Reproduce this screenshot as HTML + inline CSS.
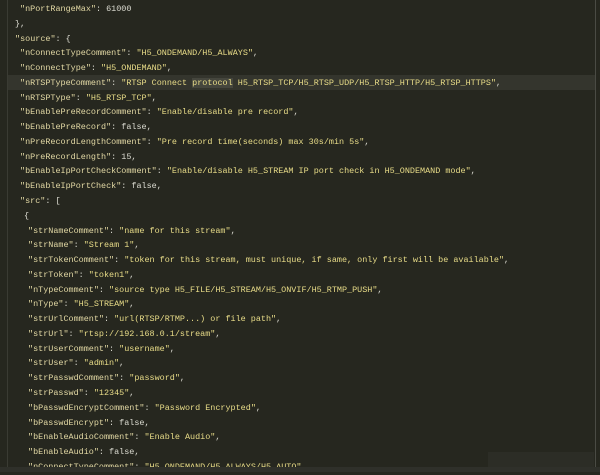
<!DOCTYPE html>
<html><head><style>
html,body{margin:0;padding:0;}
body{width:600px;height:472px;background:#26271f;overflow:hidden;position:relative;font-family:"Liberation Mono",monospace;font-size:8.45px;color:#dcdcd2;}
.g{position:absolute;left:7px;top:0;width:1px;height:468px;background:#3a3b33;}
.sb{position:absolute;left:595px;top:0;width:1px;height:468px;background:#4a4b44;}
.hl{position:absolute;left:8px;top:75px;width:587px;height:15px;background:#34352d;}
.sel{background:#45463d;}
.l{position:absolute;white-space:pre;line-height:14.77px;}
.k{color:#e2d8a4;}.s{color:#e8dc88;}
</style></head><body>
<div class="hl"></div><div class="g"></div><div class="sb"></div>
<div style="position:absolute;left:488px;top:452px;width:106px;height:15px;background:#2c2d26"></div>
<div id="c" style="position:absolute;left:15px;top:2px;">
<div class="l" style="top:0;left:5px"><span class="k">"nPortRangeMax"</span>: 61000</div>
<div class="l" style="top:14.77px;left:0">},</div>
<div class="l" style="top:29.54px;left:0"><span class="k">"source"</span>: {</div>
<div class="l" style="top:44.31px;left:5px"><span class="k">"nConnectTypeComment"</span>: <span class="s">"H5_ONDEMAND/H5_ALWAYS"</span>,</div>
<div class="l" style="top:59.08px;left:5px"><span class="k">"nConnectType"</span>: <span class="s">"H5_ONDEMAND"</span>,</div>
<div class="l" style="top:73.85px;left:5px"><span class="k">"nRTSPTypeComment"</span>: <span class="s">"RTSP Connect <span class="sel">protocol</span> H5_RTSP_TCP/H5_RTSP_UDP/H5_RTSP_HTTP/H5_RTSP_HTTPS"</span>,</div>
<div class="l" style="top:88.62px;left:5px"><span class="k">"nRTSPType"</span>: <span class="s">"H5_RTSP_TCP"</span>,</div>
<div class="l" style="top:103.39px;left:5px"><span class="k">"bEnablePreRecordComment"</span>: <span class="s">"Enable/disable pre record"</span>,</div>
<div class="l" style="top:118.16px;left:5px"><span class="k">"bEnablePreRecord"</span>: false,</div>
<div class="l" style="top:132.93px;left:5px"><span class="k">"nPreRecordLengthComment"</span>: <span class="s">"Pre record time(seconds) max 30s/min 5s"</span>,</div>
<div class="l" style="top:147.7px;left:5px"><span class="k">"nPreRecordLength"</span>: 15,</div>
<div class="l" style="top:162.47px;left:5px"><span class="k">"bEnableIpPortCheckComment"</span>: <span class="s">"Enable/disable H5_STREAM IP port check in H5_ONDEMAND mode"</span>,</div>
<div class="l" style="top:177.24px;left:5px"><span class="k">"bEnableIpPortCheck"</span>: false,</div>
<div class="l" style="top:192.01px;left:5px"><span class="k">"src"</span>: [</div>
<div class="l" style="top:206.78px;left:9px">{</div>
<div class="l" style="top:221.55px;left:13px"><span class="k">"strNameComment"</span>: <span class="s">"name for this stream"</span>,</div>
<div class="l" style="top:236.32px;left:13px"><span class="k">"strName"</span>: <span class="s">"Stream 1"</span>,</div>
<div class="l" style="top:251.09px;left:13px"><span class="k">"strTokenComment"</span>: <span class="s">"token for this stream, must unique, if same, only first will be available"</span>,</div>
<div class="l" style="top:265.86px;left:13px"><span class="k">"strToken"</span>: <span class="s">"token1"</span>,</div>
<div class="l" style="top:280.63px;left:13px"><span class="k">"nTypeComment"</span>: <span class="s">"source type H5_FILE/H5_STREAM/H5_ONVIF/H5_RTMP_PUSH"</span>,</div>
<div class="l" style="top:295.4px;left:13px"><span class="k">"nType"</span>: <span class="s">"H5_STREAM"</span>,</div>
<div class="l" style="top:310.17px;left:13px"><span class="k">"strUrlComment"</span>: <span class="s">"url(RTSP/RTMP...) or file path"</span>,</div>
<div class="l" style="top:324.94px;left:13px"><span class="k">"strUrl"</span>: <span class="s">"rtsp://192.168.0.1/stream"</span>,</div>
<div class="l" style="top:339.71px;left:13px"><span class="k">"strUserComment"</span>: <span class="s">"username"</span>,</div>
<div class="l" style="top:354.48px;left:13px"><span class="k">"strUser"</span>: <span class="s">"admin"</span>,</div>
<div class="l" style="top:369.25px;left:13px"><span class="k">"strPasswdComment"</span>: <span class="s">"password"</span>,</div>
<div class="l" style="top:384.02px;left:13px"><span class="k">"strPasswd"</span>: <span class="s">"12345"</span>,</div>
<div class="l" style="top:398.79px;left:13px"><span class="k">"bPasswdEncryptComment"</span>: <span class="s">"Password Encrypted"</span>,</div>
<div class="l" style="top:413.56px;left:13px"><span class="k">"bPasswdEncrypt"</span>: false,</div>
<div class="l" style="top:428.33px;left:13px"><span class="k">"bEnableAudioComment"</span>: <span class="s">"Enable Audio"</span>,</div>
<div class="l" style="top:443.1px;left:13px"><span class="k">"bEnableAudio"</span>: false,</div>
<div class="l" style="top:457.87px;left:13px"><span class="k">"nConnectTypeComment"</span>: <span class="s">"H5_ONDEMAND/H5_ALWAYS/H5_AUTO"</span></div>
</div>
<div style="position:absolute;left:0;top:467px;width:600px;height:5px;background:#2f302a"></div>
</body></html>
